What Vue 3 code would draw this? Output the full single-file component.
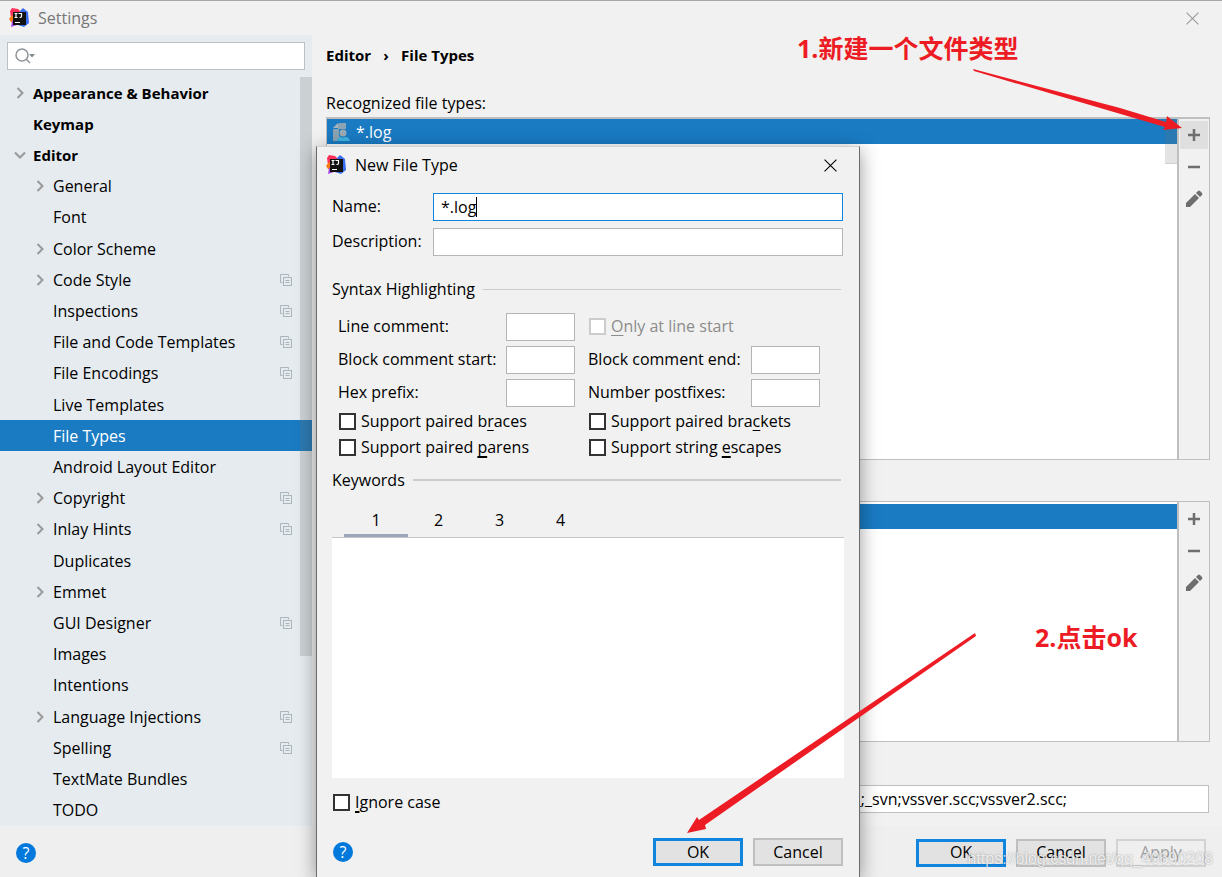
<template>
  <div class="settings-window">
    <!-- Title bar -->
    <header class="title-bar">
      <svg class="logo" viewBox="0 0 20 20">
        <path d="M1 3L3 0L9 1L12 4L8 12L2 10Z" fill="#fe315d" />
        <path d="M0 11L3 7L7 10L5 15L2 14Z" fill="#f97a12" />
        <path d="M3 13L9 10L12 17L8 17L2 19Z" fill="#a844e0" />
        <path d="M11 3L14 0L19 4L20 15L15 19L9 17Z" fill="#3a6cf0" />
        <rect x="4" y="4" width="13" height="13" fill="#111" />
        <path d="M5.5 5.5h3M7 5.5v4M5.5 9.5h3M9.5 5.5h3v3q0 1-2 1M6 14.5h5" stroke="#fff" stroke-width="1.2" fill="none" />
      </svg>
      <h1 class="title">Settings</h1>
      <button class="close-btn muted" aria-label="Close settings">
        <svg viewBox="0 0 12 12"><path d="M0.5 0.5L11.5 11.5M11.5 0.5L0.5 11.5" /></svg>
      </button>
    </header>

    <div class="window-body">
      <!-- Sidebar -->
      <aside class="sidebar">
        <div class="search-box">
          <svg class="search-icon" viewBox="0 0 20 16">
            <circle cx="7" cy="7" r="6" />
            <path d="M11 11L15 15" />
            <path class="caret" d="M14 6h6l-3 3.5z" />
          </svg>
          <input type="text" aria-label="Search settings" />
        </div>
        <nav class="tree">
          <button
            v-for="item in treeItems"
            :key="item.label"
            class="tree-row"
            :class="{ top: item.top, selected: item.label === selectedItem }"
            @click="selectedItem = item.label"
          >
            <span class="arrow">
              <svg v-if="item.arrow" :class="{ open: item.arrow === 'open' }" viewBox="0 0 12 12">
                <path d="M3.5 1L8.5 6L3.5 11" />
              </svg>
            </span>
            <span class="tree-label">{{ item.label }}</span>
            <svg v-if="item.project" class="project-icon" viewBox="0 0 12 12">
              <path d="M2.5 8.5H0.5V0.5H8.5V2.5" />
              <rect x="3.5" y="3.5" width="8" height="8" />
              <path d="M5.5 6.5h4M5.5 8.5h4" />
            </svg>
          </button>
          <div class="tree-thumb"></div>
        </nav>
      </aside>

      <!-- File types page -->
      <main class="content">
        <h2 class="breadcrumb">
          <span>Editor</span><span class="sep">›</span><span>File Types</span>
        </h2>
        <p class="list-title">Recognized file types:</p>
        <div v-for="panel in panels" :key="panel.id" class="panel" :class="panel.id">
          <div class="list">
            <div class="list-row">
              <svg v-if="panel.text" class="file-icon" viewBox="0 0 18 20">
                <path d="M7 1h7v6H6V2z" fill="#8ca3b3" />
                <path d="M1 7h6v3q-1 3 1 5q-2 1-3 4H1z" fill="#8ca3b3" />
                <path d="M1 6L6 1V6z" fill="#a5b4bd" />
                <circle cx="11" cy="11" r="3.5" fill="#9aa9b2" />
                <path d="M5 19q1-4 4-4q2 1.5 4 0q4 0 5 4z" fill="#40b6e0" />
              </svg>
              <span>{{ panel.text }}</span>
            </div>
            <div v-if="panel.text" class="list-thumb"></div>
          </div>
          <div class="tools">
            <button class="tool-btn" :class="{ hovered: panel.text }" aria-label="Add">
              <svg viewBox="0 0 16 16"><path d="M2 8h12M8 2v12" /></svg>
            </button>
            <button class="tool-btn" aria-label="Remove">
              <svg viewBox="0 0 16 16"><path d="M2 8h12" /></svg>
            </button>
            <button class="tool-btn" aria-label="Edit">
              <svg class="pencil" viewBox="0 0 18 18">
                <path d="M1 13L10 4L14 8L5 17H1z" />
                <path d="M11 3L13 1q1-1 2 0l2 2q1 1 0 2L15 7z" />
              </svg>
            </button>
          </div>
        </div>
        <input v-model="ignoredFiles" class="ignored-input" type="text" aria-label="Ignore files and folders" />
      </main>
    </div>

    <footer class="window-footer">
      <button class="help-btn">?</button>
      <div class="btn-group">
        <button class="btn primary">OK</button>
        <button class="btn">Cancel</button>
        <button class="btn" disabled>Apply</button>
      </div>
    </footer>

    <!-- New File Type dialog -->
    <section class="dialog" role="dialog" aria-labelledby="dialog-title">
      <header class="dialog-header">
        <svg class="logo" viewBox="0 0 20 20">
          <path d="M1 3L3 0L9 1L12 4L8 12L2 10Z" fill="#fe315d" />
          <path d="M0 11L3 7L7 10L5 15L2 14Z" fill="#f97a12" />
          <path d="M3 13L9 10L12 17L8 17L2 19Z" fill="#a844e0" />
          <path d="M11 3L14 0L19 4L20 15L15 19L9 17Z" fill="#3a6cf0" />
          <rect x="4" y="4" width="13" height="13" fill="#111" />
          <path d="M5.5 5.5h3M7 5.5v4M5.5 9.5h3M9.5 5.5h3v3q0 1-2 1M6 14.5h5" stroke="#fff" stroke-width="1.2" fill="none" />
        </svg>
        <h2 id="dialog-title" class="title">New File Type</h2>
        <button class="close-btn" aria-label="Close dialog">
          <svg viewBox="0 0 12 12"><path d="M0.5 0.5L11.5 11.5M11.5 0.5L0.5 11.5" /></svg>
        </button>
      </header>

      <div class="name-grid">
        <label for="name">Name:</label>
        <div class="text-field focused">
          <input id="name" v-model="name" type="text" :size="name.length" />
          <span class="cursor"></span>
        </div>
        <label for="description">Description:</label>
        <input id="description" v-model="description" class="text-field" type="text" />
      </div>

      <h3 class="section-title">Syntax Highlighting</h3>
      <div class="syntax-grid">
        <label for="line-comment">Line comment:</label>
        <input id="line-comment" class="text-field" type="text" />
        <label class="check only-start">
          <input type="checkbox" disabled /><span><u>O</u>nly at line start</span>
        </label>
        <label for="block-start">Block comment start:</label>
        <input id="block-start" class="text-field" type="text" />
        <label for="block-end" class="second">Block comment end:</label>
        <input id="block-end" class="text-field" type="text" />
        <label for="hex-prefix">Hex prefix:</label>
        <input id="hex-prefix" class="text-field" type="text" />
        <label for="postfixes" class="second">Number postfixes:</label>
        <input id="postfixes" class="text-field" type="text" />
      </div>
      <div class="check-grid">
        <label class="check"><input type="checkbox" /><span>Support paired b<u>r</u>aces</span></label>
        <label class="check"><input type="checkbox" /><span>Support paired bra<u>c</u>kets</span></label>
        <label class="check"><input type="checkbox" /><span>Support paired <u class="thick">p</u>arens</span></label>
        <label class="check"><input type="checkbox" /><span>Support string <u class="thick">e</u>scapes</span></label>
      </div>

      <h3 class="section-title keywords">Keywords</h3>
      <div class="tabs" role="tablist">
        <button
          v-for="tab in 4"
          :key="tab"
          class="tab"
          role="tab"
          :class="{ active: tab === activeTab }"
          @click="activeTab = tab"
        >
          {{ tab }}
        </button>
      </div>
      <div class="keyword-list"></div>

      <label class="check ignore-case"><input type="checkbox" /><span><u class="thick">I</u>gnore case</span></label>
      <footer class="dialog-footer">
        <button class="help-btn">?</button>
        <div class="btn-group">
          <button class="btn primary">OK</button>
          <button class="btn">Cancel</button>
        </div>
      </footer>
    </section>

    <!-- Annotations -->
    <svg class="arrows" width="1222" height="877" viewBox="0 0 1222 877">
      <path d="M973 69L974 71L1158 125L1165 127L1163 130L1182 128L1167 116L1166 122L1120 108Z" />
      <path d="M975 633L976 636L705 825L706 829L687 833L697 817L699 820Z" />
    </svg>
    <p class="note note-add">1.新建一个文件类型</p>
    <p class="note note-ok">2.点击ok</p>
    <p class="watermark">https://blog.csdn.net/qq_40690208</p>
  </div>
</template>

<script setup>
import { ref } from 'vue'

const selectedItem = ref('File Types')
const name = ref('*.log')
const description = ref('')
const activeTab = ref(1)
const ignoredFiles = ref(
  '*.hprof;*.pyc;*.pyo;*.rbc;*.yarb;.DS_Store;.git;.hg;.svn;CVS;__pycache__;_svn;vssver.scc;vssver2.scc;'
)

const treeItems = [
  { label: 'Appearance & Behavior', top: true, arrow: 'closed' },
  { label: 'Keymap', top: true },
  { label: 'Editor', top: true, arrow: 'open' },
  { label: 'General', arrow: 'closed' },
  { label: 'Font' },
  { label: 'Color Scheme', arrow: 'closed' },
  { label: 'Code Style', arrow: 'closed', project: true },
  { label: 'Inspections', project: true },
  { label: 'File and Code Templates', project: true },
  { label: 'File Encodings', project: true },
  { label: 'Live Templates' },
  { label: 'File Types' },
  { label: 'Android Layout Editor' },
  { label: 'Copyright', arrow: 'closed', project: true },
  { label: 'Inlay Hints', arrow: 'closed', project: true },
  { label: 'Duplicates' },
  { label: 'Emmet', arrow: 'closed' },
  { label: 'GUI Designer', project: true },
  { label: 'Images' },
  { label: 'Intentions' },
  { label: 'Language Injections', arrow: 'closed', project: true },
  { label: 'Spelling', project: true },
  { label: 'TextMate Bundles' },
  { label: 'TODO' }
]

const panels = [
  { id: 'types', text: '*.log' },
  { id: 'patterns', text: '' }
]
</script>

<style>
body {
  margin: 0;
}
</style>

<style scoped>
.settings-window {
  --blue: #1a7bc3;
  --border: #bfbfbf;
  --bg: #f1f1f1;

  position: relative;
  display: flex;
  flex-direction: column;
  height: 100vh;
  overflow: hidden;
  box-sizing: border-box;
  border-top: 1px solid #a6a6a6;
  background: var(--bg);
  color: #000;
  font-family: 'Open Sans', 'Noto Sans CJK SC', sans-serif;
  font-size: 16px;
  line-height: 20px;
}

.settings-window * {
  box-sizing: border-box;
}

h1,
h2,
h3,
p {
  margin: 0;
  font-size: inherit;
  font-weight: normal;
}

button,
input {
  margin: 0;
  padding: 0;
  border: none;
  background: none;
  color: inherit;
  font: inherit;
  outline: none;
}

svg {
  display: block;
  flex-shrink: 0;
}

/* Title bar */
.title-bar {
  display: flex;
  align-items: center;
  height: 34px;
  padding: 0 23px 0 9px;
  color: #777;
}

.logo {
  width: 20px;
  height: 20px;
}

.title {
  flex: 1;
  margin-left: 9px;
}

.close-btn svg {
  width: 13px;
  height: 13px;
  stroke: #000;
  fill: none;
}

.close-btn.muted svg {
  stroke: #999;
}

.window-body {
  display: flex;
  flex: 1;
  min-height: 0;
}

/* Sidebar */
.sidebar {
  display: flex;
  flex-direction: column;
  width: 312px;
  background: #e5ebef;
}

.search-box {
  display: flex;
  align-items: center;
  height: 28px;
  margin: 7px;
  padding-left: 7px;
  border: 1px solid var(--border);
  background: #fff;
}

.search-box input {
  flex: 1;
}

.search-icon {
  width: 20px;
  height: 16px;
  fill: none;
  stroke: #8d959b;
  stroke-width: 1.5;
}

.search-icon .caret {
  fill: #7f8b91;
  stroke: none;
}

.tree {
  position: relative;
  display: flex;
  flex: 1;
  flex-direction: column;
}

.tree-row {
  display: flex;
  flex: 1;
  align-items: center;
  padding: 0 20px 0 34px;
  text-align: left;
}

.tree-row.top {
  padding-left: 14px;
  font-size: 15px;
  font-weight: bold;
}

.tree-row.selected {
  background: var(--blue);
  color: #fff;
}

.arrow {
  width: 19px;
}

.arrow svg {
  width: 12px;
  height: 12px;
  fill: none;
  stroke: #999;
  stroke-width: 2;
}

.arrow svg.open {
  transform: rotate(90deg);
}

.tree-label {
  flex: 1;
}

.project-icon {
  width: 12px;
  height: 12px;
  fill: none;
  stroke: #aab5bc;
}

.tree-thumb {
  position: absolute;
  top: 0;
  right: 0;
  width: 12px;
  height: 579px;
  background: rgba(115, 115, 115, 0.22);
}

/* File types page */
.content {
  display: flex;
  flex: 1;
  flex-direction: column;
  padding: 10px 12px 13px 14px;
}

.breadcrumb {
  display: flex;
  font-size: 15px;
  font-weight: bold;
}

.breadcrumb .sep {
  width: 30px;
  text-align: center;
}

.list-title {
  margin: 28px 0 4px;
}

.panel {
  display: flex;
  border: 1px solid var(--border);
}

.panel.types {
  flex: 342;
  border-top-width: 2px;
}

.panel.patterns {
  flex: 241;
  margin: 41px 0 43px;
}

.panel.patterns .list {
  padding-top: 2px;
}

.panel.patterns .tools {
  padding-top: 3px;
}

.list {
  position: relative;
  flex: 1;
  background: #fff;
}

.list-row {
  display: flex;
  align-items: center;
  gap: 6px;
  height: 25px;
  padding-left: 5px;
  background: var(--blue);
  color: #fff;
}

.file-icon {
  width: 18px;
  height: 20px;
}

.list-thumb {
  position: absolute;
  top: 0;
  right: 0;
  width: 12px;
  height: 45px;
  border-bottom: 1px solid #d0d0d0;
  background: rgba(115, 115, 115, 0.2);
}

.tools {
  display: flex;
  flex-direction: column;
  gap: 4px;
  width: 32px;
  padding: 2px 1px;
  border-left: 2px solid var(--border);
}

.tool-btn {
  display: flex;
  align-items: center;
  justify-content: center;
  height: 28px;
}

.tool-btn.hovered {
  background: #dfdfdf;
}

.tool-btn svg {
  width: 16px;
  height: 16px;
  stroke: #6e6e6e;
  stroke-width: 2.5;
}

.tool-btn .pencil {
  width: 18px;
  height: 18px;
  fill: #6e6e6e;
  stroke: none;
}

.ignored-input {
  height: 28px;
  margin-right: 1px;
  padding: 0 12px 1px;
  border: 1px solid var(--border);
  background: #fff;
}

/* Footers and buttons */
.window-footer {
  display: flex;
  align-items: center;
  justify-content: space-between;
  height: 51px;
  padding: 2px 16px 0;
  background: #efefef;
}

.help-btn {
  width: 20px;
  height: 20px;
  border-radius: 50%;
  background: #0078dc;
  color: #fff;
  text-align: center;
}

.btn-group {
  display: flex;
  gap: 10px;
}

.btn {
  width: 90px;
  height: 28px;
  padding-bottom: 1px;
  border: 2px solid var(--border);
  background: #e2e2e2;
}

.btn.primary {
  border: 3px solid #0f85e0;
}

.btn:disabled {
  border-color: #d2d2d2;
  background: #efefef;
  color: #a0a0a0;
}

/* Dialog */
.dialog {
  position: absolute;
  top: 145px;
  bottom: 0;
  left: 316px;
  display: flex;
  flex-direction: column;
  width: 544px;
  padding: 0 15px 11px;
  border: 1px solid #6b6b6b;
  border-top-color: #d2d2d2;
  border-bottom: none;
  background: var(--bg);
  box-shadow: 0 4px 18px rgba(0, 0, 0, 0.4);
}

.dialog-header {
  display: flex;
  align-items: center;
  height: 36px;
  margin: 0 7px 10px -6px;
}

.name-grid {
  display: grid;
  grid-template-columns: 101px 1fr;
  gap: 7px 0;
  align-items: center;
  margin-right: 1px;
}

.name-grid label,
.syntax-grid label {
  padding-bottom: 2px;
}

.text-field {
  display: flex;
  align-items: center;
  width: 100%;
  height: 28px;
  padding: 0 7px 1px;
  border: 1px solid #b5b5b5;
  background: #fff;
}

.text-field.focused {
  border-color: #0f85e0;
}

.text-field.focused input {
  field-sizing: content;
}

.cursor {
  width: 1px;
  height: 20px;
  background: #000;
}

.section-title {
  display: flex;
  align-items: center;
  height: 24px;
  margin: 21px 3px 12px 0;
}

.section-title::after {
  content: '';
  flex: 1;
  height: 1px;
  margin-left: 8px;
  background: #ccc;
}

.section-title.keywords {
  margin: 8px 3px 11px 0;
}

.section-title.keywords::after {
  height: 2px;
}

.syntax-grid {
  display: grid;
  grid-template-columns: 168px 69px 176px 69px;
  row-gap: 5px;
  align-items: center;
  margin-left: 6px;
}

.syntax-grid .second {
  padding-left: 13px;
}

.syntax-grid .only-start {
  grid-column: span 2;
  padding-left: 14px;
  color: #8c8c8c;
}

.check-grid {
  display: grid;
  grid-template-columns: 250px 1fr;
  margin: 1px 0 0 7px;
}

.check {
  display: flex;
  align-items: center;
  gap: 5px;
  height: 26px;
}

.check input {
  width: 17px;
  height: 17px;
  border: 2px solid #333;
  background: #fff;
  appearance: none;
}

.only-start input {
  border-color: #ccc;
}

.check u {
  text-decoration-thickness: 1px;
  text-underline-offset: 3px;
}

.check u.thick {
  text-decoration-thickness: 2px;
  text-decoration-skip-ink: none;
}

.tabs {
  display: flex;
  height: 35px;
  padding-left: 12px;
  border-bottom: 1px solid #c6c6c6;
}

.tab {
  width: 61px;
  padding-top: 2px;
  border-bottom: 3px solid transparent;
}

.tab.active {
  width: 64px;
  border-color: #9aa7bb;
}

.keyword-list {
  flex: 1;
  background: #fff;
}

.ignore-case {
  margin: 11px 0 23px 1px;
}

.dialog-footer {
  display: flex;
  align-items: center;
  justify-content: space-between;
  padding: 0 1px;
}

/* Annotations */
.arrows {
  position: absolute;
  top: -1px;
  left: 0;
  fill: #ed1c24;
  pointer-events: none;
}

.note {
  position: absolute;
  color: #ed1c24;
  font-size: 25px;
  font-weight: bold;
  line-height: 32px;
  white-space: nowrap;
}

.note-add {
  top: 31px;
  left: 797px;
}

.note-ok {
  top: 620px;
  left: 1035px;
}

.watermark {
  position: absolute;
  right: 9px;
  bottom: 8px;
  color: rgba(255, 255, 255, 0.75);
  font-family: 'Liberation Sans', sans-serif;
  font-size: 16px;
  text-shadow: 0 0 2px rgba(0, 0, 0, 0.35);
  pointer-events: none;
}
</style>
